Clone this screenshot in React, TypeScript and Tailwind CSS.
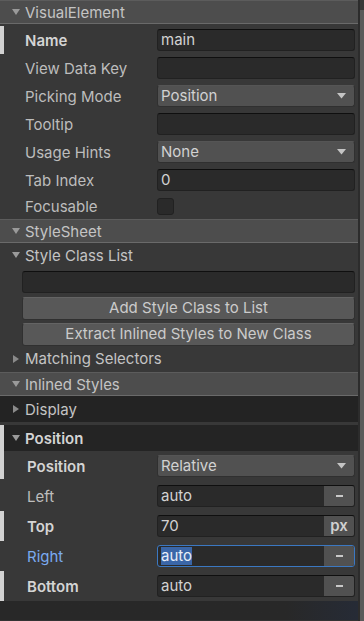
import type { ReactNode } from 'react';

function Down({ className = '' }: { className?: string }) {
  return (
    <svg width="10" height="8" viewBox="0 0 10 8" className={className}>
      <path d="M1 1 L9 1 L5 7 Z" fill="#9a9a9a" />
    </svg>
  );
}

function Right({ className = '' }: { className?: string }) {
  return (
    <svg width="8" height="10" viewBox="0 0 8 10" className={className}>
      <path d="M1 1 L7 5 L1 9 Z" fill="#8a8a8a" />
    </svg>
  );
}

function Header({ title }: { title: string }) {
  return (
    <div className="flex items-center h-6 bg-[#4d4d4d] border-t border-[#5c5c5c] border-b border-b-[#6a6a6a] text-[#c4c4c4] shrink-0">
      <Down className="ml-[11px] mr-[4px]" />
      <span className="pt-[2px]">{title}</span>
    </div>
  );
}

function Field({
  label,
  bold,
  marked,
  blue,
  indent,
  h = 'h-7',
  children,
}: {
  label: string;
  bold?: boolean;
  marked?: boolean;
  blue?: boolean;
  indent?: boolean;
  h?: string;
  children?: ReactNode;
}) {
  return (
    <div className={`flex items-center ${h} relative shrink-0`}>
      {marked && <div className="absolute left-0 top-0 bottom-0 w-[4px] bg-[#d2d2d2]" />}
      <span
        className={`${indent ? 'pl-[27px] pt-[3px]' : 'pl-[25px] pt-[2px]'} w-[157px] shrink-0 ${
          bold ? 'font-semibold text-[#d4d4d4]' : blue ? 'text-[#7aaaf0]' : 'text-[#bdbdbd]'
        }`}
      >
        {label}
      </span>
      <div className="w-[198px] flex">{children}</div>
    </div>
  );
}

function Input({ value = '', unit, focus }: { value?: string; unit?: string; focus?: boolean }) {
  return (
    <div
      className={`flex-1 h-[22px] rounded-[3px] bg-[#2a2a2a] border flex items-stretch overflow-hidden ${
        focus ? 'border-[#3b78c2]' : 'border-[#212121] border-t-[#0f0f0f]'
      }`}
    >
      <div className="flex-1 flex items-center pl-[3px] text-[#d2d2d2]">
        {focus ? <span className="bg-[#3a66a8] text-[#e8eef8] leading-[18px]">{value}</span> : value}
      </div>
      {unit !== undefined && (
        <div className="w-[30px] bg-[#515151] flex items-center justify-center text-[#d0d0d0] font-semibold">
          {unit === '-' ? <div className="w-[7px] h-[2px] bg-[#c8c8c8]" /> : unit}
        </div>
      )}
    </div>
  );
}

function Dropdown({ value }: { value: string }) {
  return (
    <div className="flex-1 h-[22px] rounded-[3px] bg-[#515151] border border-[#303030] border-t-[#555555] flex items-center justify-between pl-[3px] pr-[8px] text-[#d2d2d2]">
      <span>{value}</span>
      <svg width="9" height="6" viewBox="0 0 9 6">
        <path d="M0 0 L9 0 L4.5 5.5 Z" fill="#c4c4c4" />
      </svg>
    </div>
  );
}

function Button({ text }: { text: string }) {
  return (
    <div className="h-[23px] ml-[22px] mr-[3px] rounded-[3px] bg-[#585858] border border-[#303030] border-t-[#646464] flex items-center justify-center text-[#cbcbcb] shrink-0">
      {text}
    </div>
  );
}

export default function App() {
  return (
    <div
      className="w-[364px] h-[621px] flex bg-[#383838] overflow-hidden text-[15px]"
      style={{ fontFamily: 'Inter, "Noto Sans", sans-serif' }}
    >
      <div className="w-[358px] flex flex-col">
        <Header title="VisualElement" />
        <div className="h-[2px] shrink-0" />
        <Field label="Name" bold marked>
          <Input value="main" />
        </Field>
        <Field label="View Data Key">
          <Input />
        </Field>
        <Field label="Picking Mode">
          <Dropdown value="Position" />
        </Field>
        <Field label="Tooltip">
          <Input />
        </Field>
        <Field label="Usage Hints">
          <Dropdown value="None" />
        </Field>
        <Field label="Tab Index">
          <Input value="0" />
        </Field>
        <Field label="Focusable" h="h-[25px]">
          <div className="w-[17px] h-[17px] rounded-[3px] bg-[#2a2a2a] border border-[#212121]" />
        </Field>
        <Header title="StyleSheet" />
        <div className="flex items-center h-6 text-[#c4c4c4] shrink-0">
          <Down className="ml-[11px] mr-[4px]" />
          <span className="pt-[2px]">Style Class List</span>
        </div>
        <div className="h-[22px] ml-[22px] mr-[3px] mt-[4px] rounded-[3px] bg-[#2a2a2a] border border-[#212121] border-t-[#0f0f0f] shrink-0" />
        <div className="h-[4px] shrink-0" />
        <Button text="Add Style Class to List" />
        <div className="h-[3px] shrink-0" />
        <Button text="Extract Inlined Styles to New Class" />
        <div className="flex items-center h-[25px] text-[#c4c4c4] shrink-0">
          <Right className="ml-[12px] mr-[5px]" />
          <span className="pt-[1px]">Matching Selectors</span>
        </div>
        <div className="h-[1px] shrink-0" />
        <Header title="Inlined Styles" />
        <div className="flex items-center h-[26px] bg-[#232323] text-[#c4c4c4] shrink-0">
          <Right className="ml-[12px] mr-[5px]" />
          <span className="pt-[3px]">Display</span>
        </div>
        <div className="h-[3px] shrink-0" />
        <div className="relative flex items-center h-[26px] bg-[#242424] text-[#d4d4d4] font-semibold shrink-0">
          <div className="absolute left-0 top-0 h-[54px] w-[4px] bg-[#d2d2d2]" />
          <Down className="ml-[11px] mr-[4px]" />
          <span className="pt-[2px]">Position</span>
        </div>
        <Field label="Position" bold indent h="h-[30px]">
          <Dropdown value="Relative" />
        </Field>
        <Field label="Left" indent h="h-[30px]">
          <Input value="auto" unit="-" />
        </Field>
        <Field label="Top" bold marked indent h="h-[30px]">
          <Input value="70" unit="px" />
        </Field>
        <Field label="Right" blue indent h="h-[30px]">
          <Input value="auto" unit="-" focus />
        </Field>
        <Field label="Bottom" bold marked indent h="h-[30px]">
          <Input value="auto" unit="-" />
        </Field>
        <div className="flex-1 border-b border-[#333333] bg-gradient-to-r from-[#282828] from-80% to-[#262b36]" />
      </div>
      <div className="w-[6px] flex">
        <div className="w-[2px] bg-[#2c2c2c]" />
        <div className="flex-1 bg-[#5a5a5a] mt-[10px]" />
      </div>
    </div>
  );
}
